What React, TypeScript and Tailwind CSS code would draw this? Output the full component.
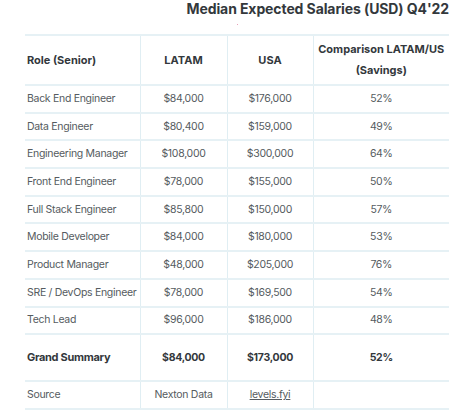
import React from "react";

type Row = { role: string; latam: string; usa: string; savings: string };

const rows: Row[] = [
    { role: "Back End Engineer", latam: "$84,000", usa: "$176,000", savings: "52%" },
    { role: "Data Engineer", latam: "$80,400", usa: "$159,000", savings: "49%" },
    { role: "Engineering Manager", latam: "$108,000", usa: "$300,000", savings: "64%" },
    { role: "Front End Engineer", latam: "$78,000", usa: "$155,000", savings: "50%" },
    { role: "Full Stack Engineer", latam: "$85,800", usa: "$150,000", savings: "57%" },
    { role: "Mobile Developer", latam: "$84,000", usa: "$180,000", savings: "53%" },
    { role: "Product Manager", latam: "$48,000", usa: "$205,000", savings: "76%" },
    { role: "SRE / DevOps Engineer", latam: "$78,000", usa: "$169,500", savings: "54%" },
    { role: "Tech Lead", latam: "$96,000", usa: "$186,000", savings: "48%" },
];

const App: React.FC = () => {
    return (
        <div className="w-[474px] h-[411px] bg-white overflow-hidden font-['Inter',sans-serif] text-[#555b60]">
            <h2 className="pr-[25px] text-right text-[14px] leading-[18px] font-bold text-[#33383c] tracking-[-0.1px]">
                Median Expected Salaries (USD) Q4'22
            </h2>
            <div className="flex justify-center h-[16px]">
                <span className="mt-[6px] w-[1px] h-[1px] bg-[#e8a0b8]"></span>
            </div>

            <table className="ml-[25px] w-[424px] border-collapse table-fixed text-[10.5px] tracking-[-0.3px]">
                <colgroup>
                    <col className="w-[115px]" />
                    <col className="w-[87px]" />
                    <col className="w-[86px]" />
                    <col className="w-[136px]" />
                </colgroup>
                <thead>
                    <tr className="h-[50px] border-y-2 border-[#e6f1f5] text-[11px] tracking-normal text-[#33383c]">
                        <th className="pl-[2px] text-left font-bold">Role (Senior)</th>
                        <th className="border-x border-[#e0eef3] font-bold">LATAM</th>
                        <th className="border-r border-[#e0eef3] font-bold">USA</th>
                        <th className="font-bold leading-[21px]">
                            Comparison LATAM/US
                            <br />
                            (Savings)
                        </th>
                    </tr>
                </thead>
                <tbody>
                    {rows.map((row, index) => (
                        <tr key={index} className="h-[27.7px] border-b-2 border-[#e6f1f5]">
                            <td className="pl-[2px] whitespace-nowrap">{row.role}</td>
                            <td className="text-center border-x border-[#e0eef3]">{row.latam}</td>
                            <td className="text-center border-r border-[#e0eef3]">{row.usa}</td>
                            <td className="text-center">{row.savings}</td>
                        </tr>
                    ))}
                    <tr className="h-[47px] border-b-2 border-[#e6f1f5] font-bold text-[#33383c]">
                        <td className="pl-[2px] text-[11px]">Grand Summary</td>
                        <td className="text-center border-x border-[#e0eef3]">$84,000</td>
                        <td className="text-center border-r border-[#e0eef3]">$173,000</td>
                        <td className="text-center">52%</td>
                    </tr>
                    <tr className="h-[28px] border-b-2 border-[#e6f1f5]">
                        <td className="pl-[2px]">Source</td>
                        <td className="text-center border-x border-[#e0eef3]">Nexton Data</td>
                        <td className="text-center border-r border-[#e0eef3]">
                            <a className="underline">levels.fyi</a>
                        </td>
                        <td></td>
                    </tr>
                </tbody>
            </table>
        </div>
    );
};

export default App;
